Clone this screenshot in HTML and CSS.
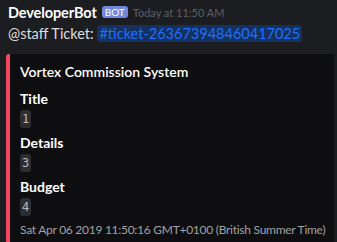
FILE: index.html
```html
<!DOCTYPE html>
<html>
<head>
<meta charset="utf-8">
<link rel="stylesheet" href="styles.css">
</head>
<body>
<div class="message">
  <div class="header">
    <span class="username">DeveloperBot</span>
    <span class="bot-tag">BOT</span>
    <span class="timestamp">Today at 11:50 AM</span>
  </div>
  <div class="content">@staff Ticket: <span class="mention">#ticket-263673948460417025</span></div>
  <div class="embed">
    <div class="embed-title">Vortex Commission System</div>
    <div class="field">
      <div class="field-name">Title</div>
      <div class="field-value"><code>1</code></div>
    </div>
    <div class="field">
      <div class="field-name">Details</div>
      <div class="field-value"><code>3</code></div>
    </div>
    <div class="field">
      <div class="field-name">Budget</div>
      <div class="field-value"><code>4</code></div>
    </div>
    <div class="footer">Sat Apr 06 2019 11:50:16 GMT+0100 (British Summer Time)</div>
  </div>
</div>
</body>
</html>
```
FILE: styles.css
```css
html, body {
  margin: 0;
  padding: 0;
  background: #1c1d21;
  overflow: hidden;
}
.message {
  padding: 2px 3px 0 8px;
  font-family: Lato, "Noto Sans", sans-serif;
  color: #dcddde;
}
.header {
  display: flex;
  align-items: center;
  height: 20px;
  white-space: nowrap;
}
.username {
  font-weight: 700;
  font-size: 14.5px;
  letter-spacing: -0.1px;
  color: #ffffff;
}
.bot-tag {
  margin-left: 5px;
  background: #7289da;
  color: #ffffff;
  font-size: 10px;
  line-height: 12px;
  padding: 0 3px;
  border-radius: 3px;
}
.timestamp {
  margin-left: 5px;
  font-size: 11px;
  color: #5e6066;
}
.content {
  margin-top: 2px;
  font-size: 14.5px;
  letter-spacing: 0;
  line-height: 20px;
  color: #dcddde;
  white-space: nowrap;
}
.mention {
  background: #15315e;
  color: #1f6fff;
  padding: 0 2px;
  border-radius: 3px;
}
.embed {
  margin-top: 10px;
  margin-left: -2px;
  border-left: 4px solid #f2455f;
  background: #0e0e10;
  padding: 9px 10px 6px 10px;
  border-radius: 3px 0 0 3px;
}
.embed-title {
  font-size: 14px;
  font-weight: 600;
  line-height: 18px;
  color: #ffffff;
  margin-bottom: 9px;
}
.field {
  margin-bottom: 6px;
}
.field-name {
  font-size: 14px;
  font-weight: 700;
  line-height: 18px;
  color: #ffffff;
  margin-bottom: 2px;
}
.field-value {
  display: flex;
  height: 18px;
}
code {
  display: block;
  background: #2b2d31;
  color: #b9bbbe;
  font-family: "DejaVu Sans Mono", monospace;
  font-size: 12px;
  line-height: 18px;
  padding: 0 2px;
  border-radius: 3px;
}
.footer {
  margin-top: 0;
  font-size: 12px;
  letter-spacing: -0.27px;
  line-height: 16px;
  color: #a0a2a6;
  white-space: nowrap;
}
```
